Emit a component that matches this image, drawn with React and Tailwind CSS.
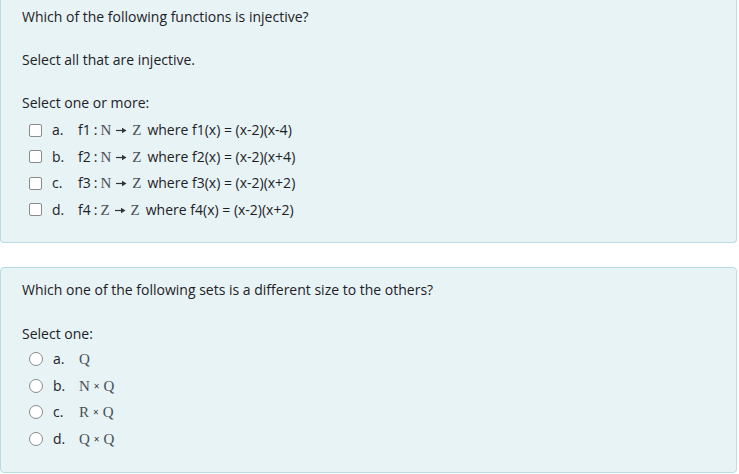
import React from "react";

const Bb = ({ children }) => (
  <span
    className="text-[15px] text-[#4a4f55]"
    style={{ fontFamily: '"Liberation Serif", "DejaVu Serif", serif' }}
  >
    {children}
  </span>
);

const Arrow = () => (
  <svg className="mx-[5px] mt-[1px]" width="11" height="7" viewBox="0 0 11 7">
    <path d="M0 3.5H7" stroke="#333" strokeWidth="1.2" />
    <path d="M6 0.8L10.5 3.5L6 6.2Z" fill="#333" />
  </svg>
);

const Times = () => <span className="mx-[4px] text-[10px] text-[#333]">×</span>;

const CheckRow = ({ letter, children }) => (
  <div className="flex items-center h-[26.5px]">
    <span className="ml-[7px] w-[13px] h-[13px] rounded-[2px] border border-[#8b8b8b] bg-white" />
    <span className="ml-[10px] w-[26px]">{letter}</span>
    <span className="flex items-center">{children}</span>
  </div>
);

const RadioRow = ({ letter, children }) => (
  <div className="flex items-center h-[26.5px]">
    <span className="ml-[7px] w-[14px] h-[14px] rounded-full border border-[#8b8b8b] bg-white" />
    <span className="ml-[10px] w-[26px]">{letter}</span>
    <span className="flex items-center">{children}</span>
  </div>
);

const Func = ({ n, from, rest }) => (
  <>
    <span>f{n}</span>
    <span className="mx-[3px]">:</span>
    <Bb>{from}</Bb>
    <Arrow />
    <Bb>Z</Bb>
    <span className="ml-[6px]">where f{n}(x) = {rest}</span>
  </>
);

export default function App() {
  return (
    <div
      className="w-[737px] bg-white text-[14px] leading-[22px] text-[#1d2125]"
      style={{ fontFamily: '"Open Sans", "Noto Sans", sans-serif' }}
    >
      <div className="bg-[#e7f3f5] border-x border-b border-[#b7dde5] rounded-b-[4px] px-[21px] pt-[6px] pb-[19px]">
        <p>Which of the following functions is injective?</p>
        <p className="mt-[21px]">Select all that are injective.</p>
        <p className="mt-[21px]">Select one or more:</p>
        <div className="mt-[3px]">
          <CheckRow letter="a.">
            <Func n="1" from="N" rest="(x-2)(x-4)" />
          </CheckRow>
          <CheckRow letter="b.">
            <Func n="2" from="N" rest="(x-2)(x+4)" />
          </CheckRow>
          <CheckRow letter="c.">
            <Func n="3" from="N" rest="(x-2)(x+2)" />
          </CheckRow>
          <CheckRow letter="d.">
            <Func n="4" from="Z" rest="(x-2)(x+2)" />
          </CheckRow>
        </div>
      </div>

      <div className="mt-[24px] bg-[#e7f3f5] border border-[#b7dde5] rounded-[4px] px-[21px] pt-[11px] pb-[20px]">
        <p>Which one of the following sets is a different size to the others?</p>
        <p className="mt-[22px]">Select one:</p>
        <div className="mt-[1px]">
          <RadioRow letter="a.">
            <Bb>Q</Bb>
          </RadioRow>
          <RadioRow letter="b.">
            <Bb>N</Bb>
            <Times />
            <Bb>Q</Bb>
          </RadioRow>
          <RadioRow letter="c.">
            <Bb>R</Bb>
            <Times />
            <Bb>Q</Bb>
          </RadioRow>
          <RadioRow letter="d.">
            <Bb>Q</Bb>
            <Times />
            <Bb>Q</Bb>
          </RadioRow>
        </div>
      </div>
    </div>
  );
}
